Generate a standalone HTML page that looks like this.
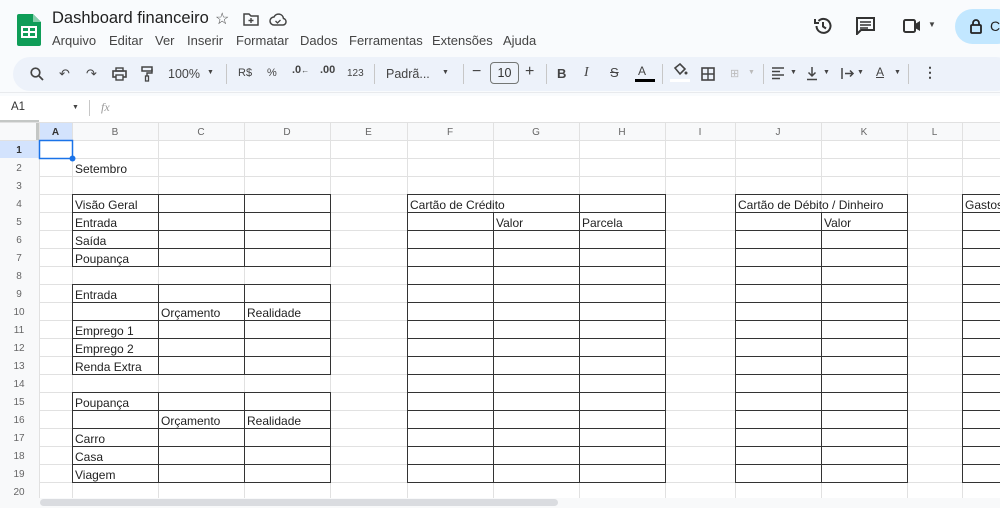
<!DOCTYPE html>
<html><head><meta charset="utf-8"><style>
*{margin:0;padding:0;box-sizing:border-box}
body{width:1000px;height:508px;overflow:hidden;background:#fff;font-family:"Liberation Sans",Arial,sans-serif;position:relative;color:#1f1f1f}
.a{position:absolute;white-space:nowrap}
.top{position:absolute;left:0;top:0;width:1000px;height:96px;background:#f9fbfd}
.tb{position:absolute;left:13px;top:57px;width:1000px;height:34px;background:#edf2fa;border-radius:17px}
.menu{font-size:13px;color:#444;top:33px}
.t{font-size:12px;color:#333}
.cell{font-size:12.5px;color:#222}
.hd{font-size:10.5px;color:#666;text-align:center}
.ic{font-size:13px;color:#444;top:66px}
.sep{position:absolute;top:64px;width:1px;height:20px;background:#c7c7c7}
</style></head><body>
<div class="top"></div>
<!-- logo -->
<svg class="a" style="left:17px;top:14px" width="24" height="32" viewBox="0 0 24 32"><path d="M2 0h14l8 8v22a2 2 0 0 1-2 2H2a2 2 0 0 1-2-2V2a2 2 0 0 1 2-2z" fill="#0f9d58"/><path d="M16 0v8h8z" fill="#87ceac"/><rect x="5" y="13" width="14" height="10" fill="none" stroke="#fff" stroke-width="2"/><line x1="12" y1="13" x2="12" y2="23" stroke="#fff" stroke-width="2"/><line x1="5" y1="18" x2="19" y2="18" stroke="#fff" stroke-width="2"/></svg>
<div class="a" style="left:52px;top:9px;font-size:16.5px;color:#1f1f1f">Dashboard financeiro</div>
<div class="a" style="left:215px;top:9px;font-size:16px;color:#444">☆</div>
<svg class="a" style="left:243px;top:13px" width="16" height="13"><path d="M1 1h5l2 2h7v9H1z" fill="none" stroke="#444" stroke-width="1.5"/><path d="M8 5v5M5.5 7.5h5" stroke="#444" stroke-width="1.4"/></svg>
<svg class="a" style="left:269px;top:13px" width="18" height="13"><path d="M5 12a4 4 0 0 1 0-8 5 5 0 0 1 9.5 1.5A3.3 3.3 0 0 1 14 12z" fill="none" stroke="#444" stroke-width="1.5"/><path d="M6.5 8l2 2 3-3" fill="none" stroke="#444" stroke-width="1.3"/></svg>
<div class="a menu" style="left:52px">Arquivo</div>
<div class="a menu" style="left:109px">Editar</div>
<div class="a menu" style="left:155px">Ver</div>
<div class="a menu" style="left:187px">Inserir</div>
<div class="a menu" style="left:236px">Formatar</div>
<div class="a menu" style="left:300px">Dados</div>
<div class="a menu" style="left:349px">Ferramentas</div>
<div class="a menu" style="left:432px">Extensões</div>
<div class="a menu" style="left:503px">Ajuda</div>
<!-- right icons -->
<svg class="a" style="left:813px;top:16px" width="20" height="20" viewBox="0 0 20 20"><path d="M3.5 10a7 7 0 1 0 2-5" fill="none" stroke="#333" stroke-width="2"/><path d="M2 3v4h4" fill="none" stroke="#333" stroke-width="2"/><path d="M10 6v4.5l3 2" fill="none" stroke="#333" stroke-width="2"/></svg>
<svg class="a" style="left:856px;top:17px" width="19" height="18"><path d="M1 1h17v12H5l-4 4z" fill="none" stroke="#333" stroke-width="2"/><path d="M4 5h11M4 8h11M4 11h8" stroke="#333" stroke-width="1.5"/></svg>
<svg class="a" style="left:903px;top:19px" width="18" height="14"><rect x="1" y="1" width="11" height="12" rx="1.5" fill="none" stroke="#333" stroke-width="2"/><path d="M12 5l5-3v10l-5-3z" fill="#333"/></svg>
<div class="a" style="left:928px;top:20px;font-size:8px;color:#444">▼</div>
<div class="a" style="left:955px;top:9px;width:60px;height:35px;background:#c2e7ff;border-radius:18px"></div>
<svg class="a" style="left:970px;top:19px" width="12" height="15"><rect x="1" y="6" width="10" height="8" rx="1" fill="none" stroke="#222" stroke-width="1.8"/><path d="M3 6V4a3 3 0 0 1 6 0v2" fill="none" stroke="#222" stroke-width="1.8"/></svg>
<div class="a" style="left:990px;top:18px;font-size:14px;color:#222">C</div>
<!-- toolbar -->
<div class="tb"></div>
<svg class="a" style="left:30px;top:67px" width="14" height="14"><circle cx="5.5" cy="5.5" r="4.3" fill="none" stroke="#444" stroke-width="1.7"/><path d="M9 9l4 4" stroke="#444" stroke-width="1.8"/></svg>
<div class="a ic" style="left:59px">↶</div>
<div class="a ic" style="left:86px">↷</div>
<svg class="a" style="left:112px;top:67px" width="15" height="14"><rect x="1" y="4" width="13" height="6" fill="none" stroke="#444" stroke-width="1.6"/><rect x="4" y="1" width="7" height="3" fill="none" stroke="#444" stroke-width="1.4"/><rect x="4" y="8" width="7" height="5" fill="#edf2fa" stroke="#444" stroke-width="1.4"/></svg>
<svg class="a" style="left:141px;top:66px" width="12" height="16"><rect x="1" y="1" width="10" height="4" fill="none" stroke="#444" stroke-width="1.5"/><path d="M11 3h0v4H6v3" fill="none" stroke="#444" stroke-width="1.4"/><rect x="4.5" y="10" width="3" height="5" fill="none" stroke="#444" stroke-width="1.3"/></svg>
<div class="a" style="left:168px;top:67px;font-size:12.5px;color:#444">100%</div>
<div class="a" style="left:207px;top:69px;font-size:7px;color:#444">▼</div>
<div class="sep" style="left:226px"></div>
<div class="a" style="left:238px;top:67px;font-size:11px;color:#444">R$</div>
<div class="a" style="left:267px;top:67px;font-size:11px;color:#444">%</div>
<div class="a" style="left:292px;top:64px;font-size:11px;color:#444;font-weight:bold">.0<span style="font-size:8px">←</span></div>
<div class="a" style="left:320px;top:64px;font-size:11px;color:#444;font-weight:bold">.00</div>
<div class="a" style="left:347px;top:68px;font-size:10px;color:#444">123</div>
<div class="sep" style="left:374px"></div>
<div class="a" style="left:386px;top:67px;font-size:12.5px;color:#444">Padrã...</div>
<div class="a" style="left:442px;top:69px;font-size:7px;color:#444">▼</div>
<div class="sep" style="left:463px"></div>
<div class="a" style="left:472px;top:63px;font-size:16px;color:#444">−</div>
<div class="a" style="left:490px;top:62px;width:29px;height:22px;border:1px solid #747775;border-radius:4px;font-size:12.5px;text-align:center;line-height:20px;color:#333">10</div>
<div class="a" style="left:525px;top:63px;font-size:16px;color:#444">+</div>
<div class="sep" style="left:546px"></div>
<div class="a" style="left:557px;top:66px;font-size:13px;font-weight:bold;color:#444">B</div>
<div class="a" style="left:584px;top:65px;font-size:14px;font-style:italic;font-family:'Liberation Serif',serif;color:#444">I</div>
<div class="a" style="left:610px;top:65px;font-size:13px;color:#444;text-decoration:line-through">S</div>
<div class="a" style="left:638px;top:64px;font-size:12px;color:#444">A</div>
<div class="a" style="left:635px;top:79px;width:20px;height:3px;background:#000"></div>
<div class="sep" style="left:662px"></div>
<svg class="a" style="left:672px;top:63px" width="16" height="14"><path d="M3 5l5-4 5 5-5 5z" fill="none" stroke="#444" stroke-width="1.6"/><circle cx="14" cy="10" r="1.5" fill="#444"/></svg>
<div class="a" style="left:670px;top:79px;width:20px;height:3px;background:#fff"></div>
<svg class="a" style="left:701px;top:67px" width="14" height="14"><rect x="1" y="1" width="12" height="12" fill="none" stroke="#444" stroke-width="1.6"/><path d="M7 1v12M1 7h12" stroke="#444" stroke-width="1.4"/></svg>
<div class="a" style="left:730px;top:67px;font-size:11px;color:#bbb">⊞</div>
<div class="a" style="left:748px;top:69px;font-size:7px;color:#bbb">▼</div>
<div class="sep" style="left:763px"></div>
<svg class="a" style="left:771px;top:67px" width="14" height="13"><path d="M1 1h12M1 4.5h8M1 8h12M1 11.5h8" stroke="#444" stroke-width="1.5"/></svg>
<div class="a" style="left:790px;top:69px;font-size:7px;color:#444">▼</div>
<svg class="a" style="left:806px;top:66px" width="12" height="15"><path d="M6 1v9M2.5 6.5L6 10l3.5-3.5M1 13.5h10" fill="none" stroke="#444" stroke-width="1.5"/></svg>
<div class="a" style="left:823px;top:69px;font-size:7px;color:#444">▼</div>
<svg class="a" style="left:841px;top:67px" width="14" height="13"><path d="M1 1v11M4 6.5h8M9 3.5l3 3-3 3" fill="none" stroke="#444" stroke-width="1.5"/></svg>
<div class="a" style="left:857px;top:69px;font-size:7px;color:#444">▼</div>
<div class="a" style="left:876px;top:65px;font-size:12px;color:#444;text-decoration:underline">A</div>
<div class="a" style="left:894px;top:69px;font-size:7px;color:#444">▼</div>
<div class="sep" style="left:908px"></div>
<div class="a" style="left:923px;top:64px;font-size:14px;color:#444;font-weight:bold">⋮</div>
<!-- formula bar -->
<div class="a" style="left:11px;top:101px;font-size:11.5px;color:#333">A1</div>
<div class="a" style="left:72px;top:104px;font-size:7px;color:#444">▼</div>
<div class="a" style="left:89px;top:100px;width:1px;height:16px;background:#c7c7c7"></div>
<div class="a" style="left:101px;top:100px;font-size:12px;font-style:italic;font-family:'Liberation Serif',serif;color:#999">fx</div>
<!-- grid -->
<svg class="a" style="left:0;top:0" width="1000" height="508">
<rect x="0" y="122" width="1000" height="18" fill="#f8f9fa"/>
<rect x="0" y="122" width="39" height="386" fill="#f8f9fa"/>
<rect x="39" y="122" width="33" height="18" fill="#d3e3fd"/>
<rect x="0" y="140" width="39" height="18" fill="#d3e3fd"/>
<rect x="0" y="120" width="39" height="3" fill="#c4c7c5"/>
<rect x="36" y="122" width="3" height="18" fill="#c4c7c5"/>
<g stroke="#e1e1e1" stroke-width="1">
<line x1="0" y1="122.5" x2="1000" y2="122.5"/>
<line x1="0" y1="140.5" x2="1000" y2="140.5"/>
<line x1="39" y1="158.5" x2="1000" y2="158.5"/><line x1="39" y1="176.5" x2="1000" y2="176.5"/><line x1="39" y1="194.5" x2="1000" y2="194.5"/><line x1="39" y1="212.5" x2="1000" y2="212.5"/><line x1="39" y1="230.5" x2="1000" y2="230.5"/><line x1="39" y1="248.5" x2="1000" y2="248.5"/><line x1="39" y1="266.5" x2="1000" y2="266.5"/><line x1="39" y1="284.5" x2="1000" y2="284.5"/><line x1="39" y1="302.5" x2="1000" y2="302.5"/><line x1="39" y1="320.5" x2="1000" y2="320.5"/><line x1="39" y1="338.5" x2="1000" y2="338.5"/><line x1="39" y1="356.5" x2="1000" y2="356.5"/><line x1="39" y1="374.5" x2="1000" y2="374.5"/><line x1="39" y1="392.5" x2="1000" y2="392.5"/><line x1="39" y1="410.5" x2="1000" y2="410.5"/><line x1="39" y1="428.5" x2="1000" y2="428.5"/><line x1="39" y1="446.5" x2="1000" y2="446.5"/><line x1="39" y1="464.5" x2="1000" y2="464.5"/><line x1="39" y1="482.5" x2="1000" y2="482.5"/>
<line x1="39.5" y1="122" x2="39.5" y2="500"/><line x1="72.5" y1="122" x2="72.5" y2="500"/><line x1="158.5" y1="122" x2="158.5" y2="500"/><line x1="244.5" y1="122" x2="244.5" y2="500"/><line x1="330.5" y1="122" x2="330.5" y2="500"/><line x1="407.5" y1="122" x2="407.5" y2="500"/><line x1="493.5" y1="122" x2="493.5" y2="500"/><line x1="579.5" y1="122" x2="579.5" y2="500"/><line x1="665.5" y1="122" x2="665.5" y2="500"/><line x1="735.5" y1="122" x2="735.5" y2="500"/><line x1="821.5" y1="122" x2="821.5" y2="500"/><line x1="907.5" y1="122" x2="907.5" y2="500"/><line x1="962.5" y1="122" x2="962.5" y2="500"/>
</g>
<g stroke="#333" stroke-width="1" fill="none">
<!-- B4:D7 -->
<rect x="72.5" y="194.5" width="258" height="72"/>
<path d="M72 212.5h258M72 230.5h258M72 248.5h258M158.5 194v72M244.5 194v72"/>
<!-- B9:D13 -->
<rect x="72.5" y="284.5" width="258" height="90"/>
<path d="M72 302.5h258M72 320.5h258M72 338.5h258M72 356.5h258M158.5 284v90M244.5 284v90"/>
<!-- B15:D19 -->
<rect x="72.5" y="392.5" width="258" height="90"/>
<path d="M72 410.5h258M72 428.5h258M72 446.5h258M72 464.5h258M158.5 392v90M244.5 392v90"/>
<!-- F4:H19 -->
<rect x="407.5" y="194.5" width="258" height="288"/>
<path d="M493.5 212v270M579.5 194v288"/>
<!-- J4:K19 -->
<rect x="735.5" y="194.5" width="172" height="288"/>
<path d="M821.5 212v270"/>
<!-- M -->
<path d="M962.5 194v288M1000 194.5h-38"/>
<path d="M407 212.5h258M407 230.5h258M407 248.5h258M407 266.5h258M407 284.5h258M407 302.5h258M407 320.5h258M407 338.5h258M407 356.5h258M407 374.5h258M407 392.5h258M407 410.5h258M407 428.5h258M407 446.5h258M407 464.5h258"/>
<path d="M735 212.5h172M735 230.5h172M735 248.5h172M735 266.5h172M735 284.5h172M735 302.5h172M735 320.5h172M735 338.5h172M735 356.5h172M735 374.5h172M735 392.5h172M735 410.5h172M735 428.5h172M735 446.5h172M735 464.5h172"/>
<path d="M962 212.5h38M962 230.5h38M962 248.5h38M962 266.5h38M962 284.5h38M962 302.5h38M962 320.5h38M962 338.5h38M962 356.5h38M962 374.5h38M962 392.5h38M962 410.5h38M962 428.5h38M962 446.5h38M962 464.5h38M962 482.5h38"/>
</g>
<rect x="39.5" y="140.5" width="33" height="18" fill="none" stroke="#1a73e8" stroke-width="1.5"/>
<circle cx="72.5" cy="158.5" r="3" fill="#1a73e8"/>
<rect x="0" y="498" width="1000" height="10" fill="#f8f9fa"/>
<rect x="40" y="499" width="518" height="7" rx="3.5" fill="#dadce0"/>
<g font-family="Liberation Sans, Arial, sans-serif" font-size="10" fill="#666" text-anchor="middle">
<text x="55.5" y="135" font-weight="bold" fill="#333">A</text><text x="115" y="135">B</text><text x="201" y="135">C</text><text x="287" y="135">D</text><text x="368.5" y="135">E</text><text x="450" y="135">F</text><text x="536" y="135">G</text><text x="622" y="135">H</text><text x="700" y="135">I</text><text x="778" y="135">J</text><text x="864" y="135">K</text><text x="934.5" y="135">L</text>
<text x="19" y="153" font-weight="bold" fill="#333">1</text><text x="19" y="171">2</text><text x="19" y="189">3</text><text x="19" y="207">4</text><text x="19" y="225">5</text><text x="19" y="243">6</text><text x="19" y="261">7</text><text x="19" y="279">8</text><text x="19" y="297">9</text><text x="19" y="315">10</text><text x="19" y="333">11</text><text x="19" y="351">12</text><text x="19" y="369">13</text><text x="19" y="387">14</text><text x="19" y="405">15</text><text x="19" y="423">16</text><text x="19" y="441">17</text><text x="19" y="459">18</text><text x="19" y="477">19</text><text x="19" y="495">20</text>
</g>
<g font-family="Liberation Sans, Arial, sans-serif" font-size="12" fill="#222">
<text x="75" y="173">Setembro</text>
<text x="75" y="209">Visão Geral</text><text x="75" y="227">Entrada</text><text x="75" y="245">Saída</text><text x="75" y="263">Poupança</text>
<text x="75" y="299">Entrada</text><text x="161" y="317">Orçamento</text><text x="247" y="317">Realidade</text>
<text x="75" y="335">Emprego 1</text><text x="75" y="353">Emprego 2</text><text x="75" y="371">Renda Extra</text>
<text x="75" y="407">Poupança</text><text x="161" y="425">Orçamento</text><text x="247" y="425">Realidade</text>
<text x="75" y="443">Carro</text><text x="75" y="461">Casa</text><text x="75" y="479">Viagem</text>
<text x="410" y="209">Cartão de Crédito</text><text x="496" y="227">Valor</text><text x="582" y="227">Parcela</text>
<text x="738" y="209">Cartão de Débito / Dinheiro</text><text x="824" y="227">Valor</text>
<text x="965" y="209">Gastos</text>
</g>
</svg>
<div class="a" style="left:0;top:92px;width:1000px;height:1px;background:#e8eaed"></div>
</body></html>
